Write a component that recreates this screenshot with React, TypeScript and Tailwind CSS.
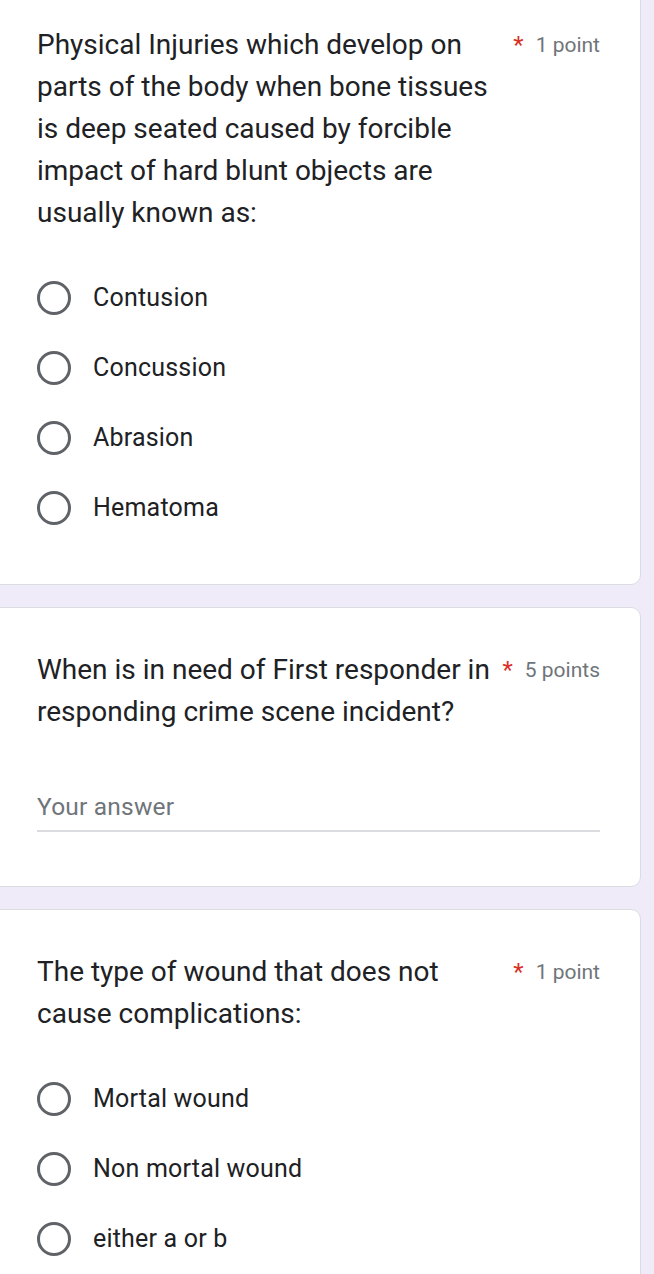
import React from "react";

const font = { fontFamily: "Roboto, 'Noto Sans', sans-serif" };

function Radio({ label }: { label: string }) {
  return (
    <div className="flex h-[70px] items-center">
      <div className="h-[34px] w-[34px] shrink-0 rounded-full border-[3px] border-[#5f6368]" />
      <span className="ml-[22px] text-[25px] tracking-[0.2px] text-[#202124]">{label}</span>
    </div>
  );
}

function Header({ title, points }: { title: string; points: string }) {
  return (
    <div className="flex items-start">
      <div className="w-[465px] shrink-0 text-[28px] leading-[42px] text-[#202124]">{title}</div>
      <span className="ml-auto text-[24px] leading-[42px] text-[#d93025]">*</span>
      <span className="ml-[12px] whitespace-nowrap text-[21px] leading-[42px] text-[#70757a]">
        {points}
      </span>
    </div>
  );
}

function Card({ children, className = "" }: { children: React.ReactNode; className?: string }) {
  return (
    <div
      className={`ml-[-10px] w-[651px] rounded-[10px] border border-[#dadce0] bg-white pl-[46px] pr-[40px] ${className}`}
    >
      {children}
    </div>
  );
}

export default function App() {
  return (
    <div className="h-[1274px] overflow-hidden bg-[#f0ebf8]" style={font}>
      <div className="flex flex-col gap-[22px]">
        <Card className="mt-[-18px] pt-[41px] pb-[41px]">
          <Header
            title="Physical Injuries which develop on parts of the body when bone tissues is deep seated caused by forcible impact of hard blunt objects are usually known as:"
            points="1 point"
          />
          <div className="mt-[29px]">
            <Radio label="Contusion" />
            <Radio label="Concussion" />
            <Radio label="Abrasion" />
            <Radio label="Hematoma" />
          </div>
        </Card>

        <Card className="pt-[41px] pb-[54px]">
          <Header
            title="When is in need of First responder in responding crime scene incident?"
            points="5 points"
          />
          <div className="mt-[59px] border-b-2 border-[#dadce0] pb-[8px]">
            <div className="text-[24.5px] leading-[30px] tracking-[0.2px] text-[#70757a]">Your answer</div>
          </div>
        </Card>

        <Card className="pt-[41px] pb-[41px]">
          <Header title="The type of wound that does not cause complications:" points="1 point" />
          <div className="mt-[29px]">
            <Radio label="Mortal wound" />
            <Radio label="Non mortal wound" />
            <Radio label="either a or b" />
          </div>
        </Card>
      </div>
    </div>
  );
}
